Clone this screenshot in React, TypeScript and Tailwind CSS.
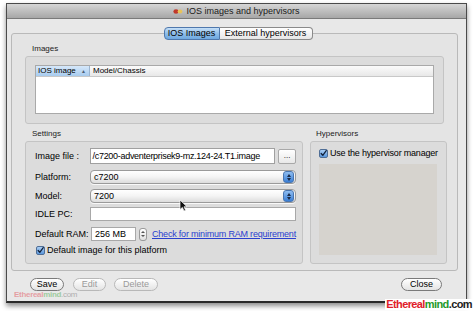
const Stepper = () => (
  <div className="w-[11px] h-[12px] rounded-[3px] bg-gradient-to-b from-[#8fbdf0] to-[#3a7fd6] border border-[#4a76b0] flex flex-col items-center justify-center gap-[1px]">
    <div className="w-0 h-0 border-l-[2.5px] border-r-[2.5px] border-b-[3px] border-l-transparent border-r-transparent border-b-[#1b2b45]" />
    <div className="w-0 h-0 border-l-[2.5px] border-r-[2.5px] border-t-[3px] border-l-transparent border-r-transparent border-t-[#1b2b45]" />
  </div>
)

const Select = ({ value }: { value: string }) => (
  <div className="w-[206px] h-[14px] rounded-[4px] border border-[#9a9a9a] bg-gradient-to-b from-white via-[#f4f4f4] to-[#dcdcdc] flex items-center pl-[3px] pr-[1px] shadow-[0_1px_0_#f8f8f8]">
    <span className="flex-1 text-[9px] text-black leading-none">{value}</span>
    <Stepper />
  </div>
)

const Check = () => (
  <div className="w-[9px] h-[9px] shrink-0 rounded-[2px] border border-[#4f6e96] bg-gradient-to-b from-[#a9cdf3] to-[#5a97dc] flex items-center justify-center">
    <svg width="9" height="9" viewBox="0 0 9 9">
      <path d="M1.5 4.5 L3.6 7 L8 0.8" stroke="#10203a" strokeWidth="1.6" fill="none" strokeLinecap="round" strokeLinejoin="round" />
    </svg>
  </div>
)

const Pill = ({ label, dim, w }: { label: string; dim?: boolean; w: string }) => (
  <div className={`${w} h-[13px] rounded-full border ${dim ? "border-[#b8b8b8] text-[#9a9a9a]" : "border-[#7a7a7a] text-black"} bg-gradient-to-b from-white to-[#e4e4e4] flex items-center justify-center text-[9px] leading-none`}>
    {label}
  </div>
)

const App = () => {
  return (
    <div className="w-[474px] h-[311px] bg-white relative overflow-hidden font-['Liberation_Sans','DejaVu_Sans',sans-serif]">
      {/* window */}
      <div className="ml-[6px] mt-[3px] w-[461px] h-[300px] border border-[#4a4a4a] border-b-[2px] border-b-[#2a2a2a] bg-[#e8e8e8] flex flex-col shadow-[0_3px_5px_rgba(0,0,0,0.45)]">
        {/* title bar */}
        <div className="h-[15px] bg-gradient-to-b from-[#d6d6d6] to-[#a7a7a7] border-b border-[#7a7a7a] flex items-center justify-center gap-[3px]">
          <svg width="10" height="7" viewBox="0 0 10 7">
            <ellipse cx="3" cy="3.5" rx="2.6" ry="2.2" fill="#c0392b" />
            <ellipse cx="7" cy="3.5" rx="2.4" ry="2" fill="#e8c35a" />
          </svg>
          <span className="text-[9px] text-[#1a1a1a] leading-none">IOS images and hypervisors</span>
        </div>

        {/* body */}
        <div className="flex-1 flex flex-col pt-[8px]">
          {/* tabs */}
          <div className="flex justify-center h-[13px] relative z-10 pl-[3px]">
            <div className="w-[56px] h-[13px] rounded-l-[4px] border border-[#4f78ad] bg-gradient-to-b from-[#c6e0f8] via-[#8ebde9] to-[#6ea8e0] flex items-center justify-center text-[9px] leading-none text-black whitespace-nowrap">
              IOS Images
            </div>
            <div className="w-[93px] h-[13px] rounded-r-[4px] border border-l-0 border-[#8a8a8a] bg-gradient-to-b from-white to-[#e6e6e6] flex items-center justify-center text-[9px] leading-none text-black whitespace-nowrap">
              External hypervisors
            </div>
          </div>

          {/* tab panel */}
          <div className="-mt-[7px] ml-[4px] mr-[8px] h-[238px] border border-[#b9b9b9] rounded-[3px] bg-[#e4e4e4] flex flex-col px-[13px] pt-[11px]">
            <span className="text-[8px] leading-none text-[#222] pl-[7px]">Images</span>
            <div className="mt-[3px] h-[68px] border border-[#c4c4c4] rounded-[3px] bg-[#dcdcdc] px-[9px] pt-[8px]">
              <div className="h-[49px] border border-[#a9a9a9] bg-white">
                <div className="h-[11px] flex border-b border-[#c8c8c8] bg-gradient-to-b from-[#fbfbfb] to-[#e8e8e8] text-[8px] leading-none">
                  <div className="w-[54px] bg-gradient-to-b from-[#d6e8fa] to-[#a7cbee] border-r border-[#9bb4cf] flex items-center pl-[2px] pr-[3px]">
                    <span className="flex-1 text-black whitespace-nowrap">IOS image</span>
                    <span className="text-[5px] text-[#4c5f76]">▲</span>
                  </div>
                  <div className="flex items-center pl-[3px] text-black">Model/Chassis</div>
                </div>
              </div>
            </div>

            <div className="mt-[6px] flex gap-[7px]">
              {/* settings */}
              <div className="w-[278px] flex flex-col">
                <span className="text-[8px] leading-none text-[#222] pl-[7px]">Settings</span>
                <div className="mt-[3px] h-[123px] border border-[#c4c4c4] rounded-[3px] bg-[#dcdcdc] pl-[9px] pr-[6px] pt-[6px] flex flex-col text-[9px] text-black leading-none whitespace-nowrap">
                  <div className="flex items-center h-[16px]">
                    <span className="w-[55px]">Image file :</span>
                    <div className="w-[187px] h-[16px] bg-white border border-[#a0a0a0] flex items-center pl-[2px] overflow-hidden tracking-[-0.3px]">
                      /c7200-adventerprisek9-mz.124-24.T1.image
                    </div>
                    <div className="ml-[3px] w-[18px] h-[15px] bg-gradient-to-b from-white to-[#e8e8e8] border border-[#a8a8a8] rounded-[2px] flex items-center justify-center text-[8px]">
                      ...
                    </div>
                  </div>
                  <div className="flex items-center mt-[6px]">
                    <span className="w-[55px]">Platform:</span>
                    <Select value="c7200" />
                  </div>
                  <div className="flex items-center mt-[5px]">
                    <span className="w-[55px]">Model:</span>
                    <Select value="7200" />
                  </div>
                  <div className="flex items-center mt-[4px] relative">
                    <span className="w-[55px]">IDLE PC:</span>
                    <div className="w-[206px] h-[14px] bg-white border border-[#a8a8a8]" />
                    {/* mouse cursor */}
                    <svg className="absolute left-[144px] -top-[8px]" width="9" height="13" viewBox="0 0 9 13">
                      <path d="M1 1 L1 10.5 L3.4 8.4 L5 12 L6.6 11.3 L5 7.8 L8 7.8 Z" fill="#111" stroke="#fff" strokeWidth="0.7" />
                    </svg>
                  </div>
                  <div className="flex items-center mt-[6px]">
                    <span className="w-[56px]">Default RAM:</span>
                    <div className="w-[45px] h-[14px] bg-white border border-[#a8a8a8] flex items-center pl-[3px]">256 MB</div>
                    <div className="ml-[3px] w-[8px] h-[13px] rounded-[3px] border border-[#9a9a9a] bg-gradient-to-b from-white to-[#e0e0e0] flex flex-col items-center justify-center gap-[2px]">
                      <div className="w-0 h-0 border-l-[2px] border-r-[2px] border-b-[2.5px] border-l-transparent border-r-transparent border-b-[#555]" />
                      <div className="w-0 h-0 border-l-[2px] border-r-[2px] border-t-[2.5px] border-l-transparent border-r-transparent border-t-[#555]" />
                    </div>
                    <span className="ml-[5px] text-[#2a3fcf] underline tracking-[-0.2px]">
                      Check for minimum RAM requirement
                    </span>
                  </div>
                  <div className="flex items-center mt-[5px] gap-[2px] pl-[1px]">
                    <Check />
                    <span>Default image for this platform</span>
                  </div>
                </div>
              </div>

              {/* hypervisors */}
              <div className="flex-1 flex flex-col">
                <span className="text-[8px] leading-none text-[#222] pl-[6px]">Hypervisors</span>
                <div className="mt-[3px] h-[123px] border border-[#c4c4c4] rounded-[3px] bg-[#dcdcdc] px-[8px] pt-[7px] flex flex-col">
                  <div className="flex items-center gap-[2px] text-[9px] leading-none text-black whitespace-nowrap tracking-[-0.2px]">
                    <Check />
                    <span>Use the hypervisor manager</span>
                  </div>
                  <div className="mt-[6px] h-[91px] mr-[1px] bg-[#d6d3ce]" />
                </div>
              </div>
            </div>
          </div>

          {/* bottom buttons */}
          <div className="mt-[7px] flex items-center pl-[23px] pr-[24px]">
            <Pill label="Save" w="w-[34px]" />
            <div className="ml-[9px]"><Pill label="Edit" dim w="w-[33px]" /></div>
            <div className="ml-[8px]"><Pill label="Delete" dim w="w-[44px]" /></div>
            <div className="flex-1" />
            <Pill label="Close" w="w-[41px]" />
          </div>
        </div>
      </div>

      {/* watermarks */}
      <div className="absolute left-[14px] top-[291px] text-[8px] leading-none font-bold opacity-40 tracking-[-0.3px]">
        <span className="text-[#e0303a]">Ethereal</span>
        <span className="text-[#30a030]">mind</span>
        <span className="text-[#555] font-normal">.com</span>
      </div>
      <div className="absolute right-[1px] top-[299px] text-[11px] leading-none font-bold tracking-[-0.6px] font-['Liberation_Sans_Narrow','Liberation_Sans',sans-serif] bg-white px-[1px]">
        <span className="text-[#e0202a]">Ethereal</span>
        <span className="text-[#1f9a2a]">mind</span>
        <span className="text-[#222]">.com</span>
      </div>
    </div>
  )
}

export default App
